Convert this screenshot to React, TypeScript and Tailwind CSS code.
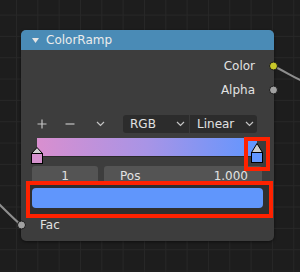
import React from "react";

const font = "font-['DejaVu_Sans',_'Liberation_Sans',_sans-serif]";

const Socket = ({ className }: { className: string }) => (
    <span
        className={`absolute top-1/2 -translate-y-1/2 w-[9px] h-[9px] rounded-full border border-[#1b1b1b] ${className}`}
    />
);

const Chevron = ({ className = "" }: { className?: string }) => (
    <svg width="9" height="6" viewBox="0 0 9 6" className={className}>
        <path d="M1 1 L4.5 4.5 L8 1" fill="none" stroke="#c4c4c4" strokeWidth="1.2" />
    </svg>
);

// colour stop handle under the ramp
const Stop = ({ fill, tri, className }: { fill: string; tri: number; className: string }) => (
    <svg width="12" height={tri + 11} className={`absolute ${className}`}>
        <polygon
            points={`0.5,${tri + 0.5} 6,0.5 11.5,${tri + 0.5}`}
            fill="#cfcfcf"
            stroke="#000"
            strokeWidth="1"
        />
        <rect x="0.5" y={tri + 0.5} width="11" height="10" fill={fill} stroke="#000" strokeWidth="1" />
    </svg>
);

export default function App() {
    return (
        <div
            className={`relative w-[300px] h-[272px] overflow-hidden bg-[#1d1d1d] bg-[linear-gradient(to_right,#272727_1px,transparent_1px),linear-gradient(to_bottom,#272727_1px,transparent_1px)] bg-[size:21.33px_21.33px] bg-[position:16px_14.6px] ${font}`}
        >
            {/* links */}
            <svg width="300" height="272" className="absolute inset-0">
                <path d="M273 66 C282 70 290 75 302 81" fill="none" stroke="#8e8e8e" strokeWidth="2" />
                <path d="M-2 203 C6 211 14 219 21 225" fill="none" stroke="#8e8e8e" strokeWidth="2" />
            </svg>

            {/* node */}
            <div className="absolute left-[21px] top-[30px] w-[253px] h-[211px] rounded-[5px] bg-[#3d3d3d] flex flex-col text-[12px] text-[#e2e2e2] shadow-[0_1px_3px_rgba(0,0,0,0.5)]">
                <div className="h-[20px] rounded-t-[5px] bg-[#4a8bb6] flex items-center text-[#ececec]">
                    <svg width="7" height="5" viewBox="0 0 7 5" className="ml-[11px]">
                        <polygon points="0,0 7,0 3.5,5" fill="#e4e4e4" />
                    </svg>
                    <span className="ml-[7px]">ColorRamp</span>
                </div>

                <div className="mt-[4px] relative h-[24px] flex items-center justify-end pr-[19px]">
                    Color
                    <Socket className="-right-[4px] bg-[#c7c729]" />
                </div>
                <div className="relative h-[24px] flex items-center justify-end pr-[19px]">
                    Alpha
                    <Socket className="-right-[4px] bg-[#a1a1a1]" />
                </div>

                {/* ramp tools */}
                <div className="mt-[13px] h-[18px] flex items-center">
                    <svg width="10" height="10" viewBox="0 0 10 10" className="ml-[16px]">
                        <path d="M5 0.5 V9.5 M0.5 5 H9.5" stroke="#c4c4c4" strokeWidth="1.2" />
                    </svg>
                    <svg width="10" height="10" viewBox="0 0 10 10" className="ml-[18px]">
                        <path d="M0.5 5 H9.5" stroke="#c4c4c4" strokeWidth="1.2" />
                    </svg>
                    <Chevron className="ml-[21px]" />
                    <div className="ml-[18px] w-[134px] h-[18px] rounded-[3px] bg-[#2c2c2c] flex">
                        <div className="w-[67px] flex items-center justify-between pl-[7px] pr-[4px] border-r border-[#3a3a3a]">
                            RGB
                            <Chevron />
                        </div>
                        <div className="flex-1 flex items-center justify-between pl-[7px] pr-[3px]">
                            Linear
                            <Chevron />
                        </div>
                    </div>
                </div>

                {/* ramp */}
                <div className="mt-[5px] ml-[16px] w-[220px] h-[19px] relative bg-[linear-gradient(to_right,#d98fcf,#a894e6,#6196ff)] border-b border-[#2a2a2a]">
                    <Stop fill="#d592ce" tri={6} className="left-[-6px] top-[9px]" />
                    <Stop fill="#6196ff" tri={9} className="left-[214px] top-[5px]" />
                    <div className="absolute left-[207px] top-[-1px] w-[26px] h-[34px] border-[4px] border-[#ff2200]" />
                </div>

                {/* stop index / position */}
                <div className="mt-[9px] ml-[11px] flex gap-[6px] h-[18px]">
                    <div className="w-[66px] rounded-[3px] bg-[#545454] flex items-center justify-center pt-[1px]">1</div>
                    <div className="w-[158px] rounded-[3px] bg-[#545454] flex items-center justify-between pl-[16px] pr-[14px] pt-[1px]">
                        <span>Pos</span>
                        <span>1.000</span>
                    </div>
                </div>

                {/* stop colour */}
                <div className="relative mt-[-3px] ml-[5px] w-[247px] h-[37px] border-[4px] border-[#ff2200] bg-[#2f2f2f] pt-[3px] pl-[2px]">
                    <div className="w-[231px] h-[20px] rounded-[4px] bg-[#6096fc]" />
                </div>

                <div className="relative mt-[0px] h-[14px] flex items-center pl-[19px]">
                    Fac
                    <Socket className="-left-[4px] bg-[#a1a1a1]" />
                </div>
            </div>
        </div>
    );
}
